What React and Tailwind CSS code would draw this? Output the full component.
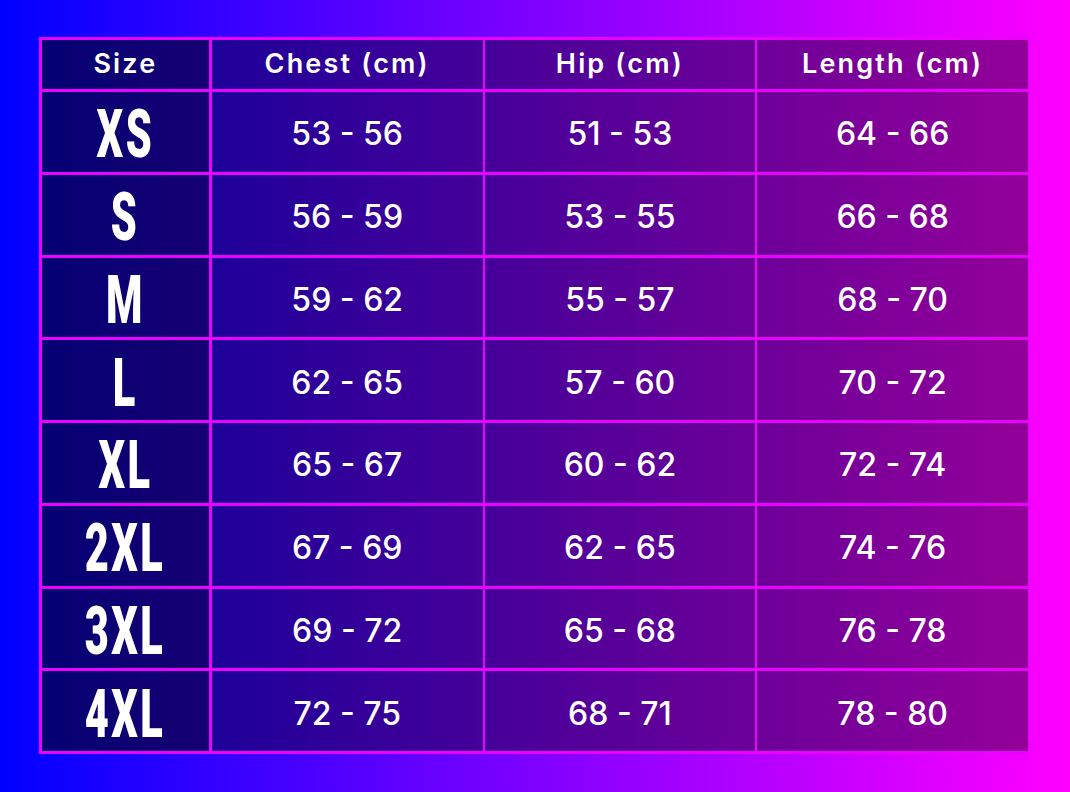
import React from "react";

const rows = [
  ["XS", "53 - 56", "51 - 53", "64 - 66"],
  ["S", "56 - 59", "53 - 55", "66 - 68"],
  ["M", "59 - 62", "55 - 57", "68 - 70"],
  ["L", "62 - 65", "57 - 60", "70 - 72"],
  ["XL", "65 - 67", "60 - 62", "72 - 74"],
  ["2XL", "67 - 69", "62 - 65", "74 - 76"],
  ["3XL", "69 - 72", "65 - 68", "76 - 78"],
  ["4XL", "72 - 75", "68 - 71", "78 - 80"],
];

const num = { fontFamily: "Inter, 'Open Sans', sans-serif" };
const big = { fontFamily: "Roboto, 'Liberation Sans', sans-serif" };

export default function App() {
  return (
    <div className="w-[1070px] h-[792px] bg-[linear-gradient(to_right,#0000ff,#ff00ff)] pl-[39px] pt-[37px]">
      <div className="w-[991px] border-t-[3px] border-l-[3px] border-[#ec00ff]">
        <div className="flex h-[52px]">
          <div className="w-[170px] border-r-[3px] border-b-[3px] border-[#ec00ff] bg-black/55 flex items-center justify-center text-white text-[27px] font-semibold tracking-[0.08em]" style={num}>
            Size
          </div>
          {["Chest (cm)", "Hip (cm)", "Length (cm)"].map((h) => (
            <div key={h} className="w-[273px] border-r-2 border-b-[3px] border-[#ec00ff] bg-black/40 flex items-center justify-center text-white text-[27px] font-semibold tracking-[0.08em]" style={num}>
              {h}
            </div>
          ))}
        </div>
        {rows.map((r) => (
          <div key={r[0]} className="flex h-[82.75px]">
            <div className="w-[170px] border-r-[3px] border-b-[3px] border-[#ec00ff] bg-black/55 flex items-center justify-center text-white overflow-hidden">
              <span className="inline-block text-[67px] leading-none font-black tracking-[4px] scale-x-[0.62] translate-y-[3px]" style={big}>
                {r[0]}
              </span>
            </div>
            {r.slice(1).map((v, i) => (
              <div key={i} className="w-[273px] border-r-2 border-b-[3px] border-[#ec00ff] bg-black/40 flex items-center justify-center text-white text-[32px] font-medium pt-[5px]" style={num}>
                {v}
              </div>
            ))}
          </div>
        ))}
      </div>
    </div>
  );
}
